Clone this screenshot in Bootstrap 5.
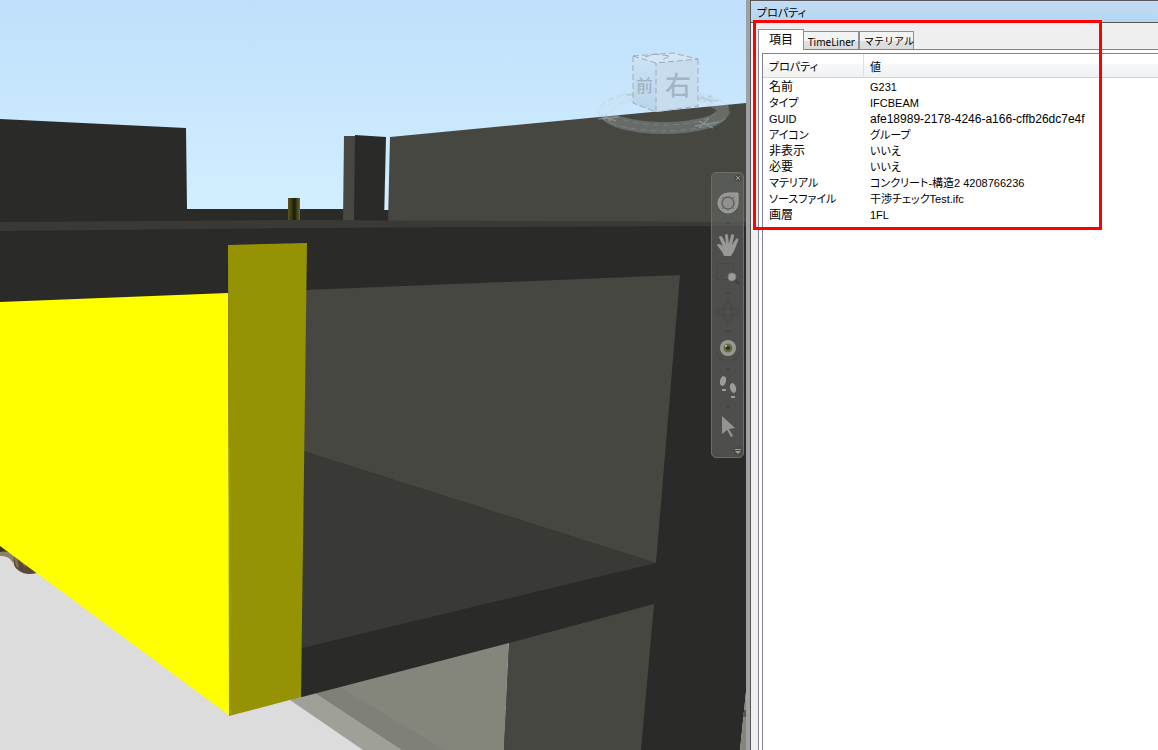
<!DOCTYPE html>
<html lang="ja">
<head>
<meta charset="utf-8">
<meta name="viewport" content="width=device-width, initial-scale=1">
<title>プロパティ</title>
<link rel="stylesheet" href="https://cdn.jsdelivr.net/npm/bootstrap@5.3.0/dist/css/bootstrap.min.css">
<script src="https://cdn.jsdelivr.net/npm/bootstrap@5.3.0/dist/js/bootstrap.bundle.min.js"></script>
<style>
body { font-family: "Liberation Sans", "Noto Sans CJK JP", sans-serif; font-size: 11px; line-height: 16px; color: #000; font-feature-settings: "palt"; }
.viewer { min-width: 0; background: #dcdcdc; }
.cube-label { font-family: "Noto Sans CJK JP", sans-serif; font-weight: 500; fill: #a3b4c4; }
.nav-tools { top: 172px; right: 2px; width: 33px; background: rgba(100, 101, 98, .62); border: 1px solid #6c6d6a; border-radius: 5px; }
.nav-tools button { border: 0; padding: 0; background: none; line-height: 0; }
.nav-tools svg { display: block; opacity: .85; }
.side { width: 412px; border-left: 4px solid #a0a0a0; background: #efefef; }
.side-in { border-left: 1px solid #58585a; }
.side-title { height: 23px; margin: 0; padding: 4px 6px 0; font-size: 11px; line-height: 16px; font-weight: 400; border-top: 1px solid #58585a; border-bottom: 1px solid #58585a; background: linear-gradient(#c4dcf4, #b4d6f2); }
.tabs { padding: 6px 0 0 7px; height: 26px; border: 0; }
.tabs .nav-link { height: 19px; padding: 2px 4px 0; border: 1px solid #8d8e98; border-bottom: 0; border-radius: 0; color: #000; line-height: 16px; background: linear-gradient(#f3f3f3 50%, #e0e0e0 50%, #dadada); }
.tabs .nav-link.active { height: 21px; width: 46px; padding: 1px 6px; border-color: #8d8e98; background: #fff; color: #000; font-size: 12px; position: relative; }
.tabs .tab-en { width: 56px; font-family: "Noto Sans", sans-serif; font-size: 10px; margin-left: -1px; white-space: nowrap; }
.tabs .tab-ja { width: 55px; font-size: 10px; white-space: nowrap; }
.page-box { margin-left: 7px; padding: 3px 0 0 3px; border: 1px solid #83838f; border-width: 1px 0 0 1px; background: #fff; }
.list-box { border: 1px solid #83838f; border-width: 1px 0 0 1px; }
.props { width: 100%; table-layout: fixed; border-collapse: separate; border-spacing: 0; }
.props th { font-weight: 400; padding: 0 6px; }
.props td { padding: 0 6px; white-space: nowrap; }
.props thead th { height: 24px; padding-top: 3px; border-bottom: 1px solid #d5d5d5; background: linear-gradient(#fff 10px, #f7f8fa 10px, #f0f1f3); }
.props thead th:first-child { width: 101px; border-right: 1px solid #dfe0e3; }
.props tbody:before { content: ""; display: block; height: 1px; }
.props .wide { font-size: 12px; }
.callout-frame { left: 2px; top: 20px; width: 349px; height: 210px; border: 3px solid #f00; pointer-events: none; }
</style>
</head>
<body>
<div class="d-flex vh-100 overflow-hidden">
  <main class="viewer flex-grow-1 position-relative">
    <svg class="d-block w-100 h-100" viewBox="0 0 746 750" preserveAspectRatio="xMidYMid slice" role="img" aria-label="3D">
      <defs>
        <linearGradient id="sky" x2="0" y2="1"><stop offset="0" stop-color="#bfdffb"/><stop offset="1" stop-color="#d2f0ff"/></linearGradient>
        <linearGradient id="pipe"><stop offset="0" stop-color="#5a5820"/><stop offset=".55" stop-color="#1c1b08"/><stop offset="1" stop-color="#6b692f"/></linearGradient>
        <linearGradient id="shade" x2="0" y2="1"><stop offset="0" stop-color="#cce3f5"/><stop offset="1" stop-color="#b8d3e8"/></linearGradient>
      </defs>
      <path fill="url(#sky)" d="M0 0h746v222H0z"/>
      <path fill="#2a2a28" d="M0 119l186 9 1 81h158v13H0z"/>
      <path fill="#464741" d="M344 136h11v86h-12z"/>
      <path fill="#2a2a28" d="M355 135l31 2-2 85h-30zM384 210h5v12h-5z"/>
      <path fill="#464741" d="M390 137l356-34v120H388z"/>
      <path fill="url(#pipe)" d="M288 198h12v23h-12z"/>
      <path fill="#393a36" d="M0 222l300-2 446 2v10H0z"/>
      <path fill="#84857b" d="M340 680l169-44-5 114h-61z"/>
      <path fill="#9fa097" d="M290 700l25-12 89 62h-41z"/>
      <path fill="#7f8077" d="M315 693l25-13 105 70h-43z"/>
      <path fill="#84857b" d="M340 687l10-8 155 0v71h-60z"/>
      <path fill="#2a2a28" d="M0 231l300-3 446-2v466l-6 58H504l5-107-207 54L0 540z"/>
      <path fill="#464741" d="M509 643l145-39-13 146H504z"/>
      <path fill="#84857b" d="M746 692v58h-6z"/><path fill="#555650" d="M744 710h2v7h-3z"/>
      <path fill="#464741" d="M305 290l375-15-24 288-353-112z"/>
      <path fill="#393a36" d="M303 451l353 112-354 85z"/>
      <path fill="#3a3b17" d="M0 543l22 15-12-5-10 1z"/><path fill="#8c8068" d="M0 552q10-2 15 5l-2 6q-4-8-13-7z"/>
      <path fill="#594a38" d="M14 556l23 17q-12 3-19-3-6-4-4-14z"/><path fill="#847158" d="M20 561l6 7-2-7zM14 556l2 10 3 3-2-12z"/>
      <path fill="#ff0" d="M0 302l228-9 2 423L0 546z"/>
      <path fill="#959303" d="M228 245l79-2-6 454-72 19z"/>
      <ellipse cx="664" cy="111" rx="59" ry="17" fill="none" stroke="#cddbe5" stroke-opacity=".25" stroke-width="12"/>
      <ellipse cx="664" cy="111" rx="66" ry="20" fill="none" stroke="#a7b3bb" stroke-opacity=".3" stroke-dasharray="6 4"/>
      <ellipse cx="664" cy="111" rx="51" ry="14" fill="none" stroke="#a7b3bb" stroke-opacity=".25" stroke-dasharray="6 4"/>
      <path d="M598 119l20-2m-16-1l14 5m-10-7l4 8m85 4l24-4m-20-1l14 7m-4-10l-10 10m-1-30l20 3m-17-5l12 7m-1-8l-8 7M626 95h8" fill="none" stroke="#a9b5bc" stroke-opacity=".45" stroke-width="1.500"/>
      <path fill="#d3e6f6" d="M633 56l40-3 25 6-42 4z"/>
      <path fill="url(#shade)" d="M633 56l23 7v49l-23-9z"/><path fill="#c7ddef" d="M656 63l42-4v47l-42 6z"/>
      <path d="M633 56l40-3 25 6-42 4zM633 56v47l23 9V63M698 59v47l-42 6M645 57l10-3 15 2-8 4" fill="none" stroke="#a2abb5" stroke-dasharray="6 3"/>
      <text class="cube-label" x="636" y="92" font-size="17">前</text>
      <text class="cube-label" x="665" y="95" font-size="26">右</text>
    </svg>
    <div class="nav-tools position-absolute d-flex flex-column" role="toolbar" aria-label="ナビゲーション">
      <button type="button" aria-label="閉じる"><svg width="31" height="12" viewBox="712 173 31 12"><circle cx="738" cy="178" r="3.5" fill="#464743"/><path d="M736 176l4 4m0-4l-4 4" stroke="#a5a6a3"/></svg></button>
      <button type="button" aria-label="ホイール"><svg width="31" height="40" viewBox="712 185 31 40"><path d="M728 193h10v10a10 10 0 1 1-10-10z" fill="#a0a19e" stroke="#b0b1ae"/><circle cx="728" cy="203" r="6" fill="none" stroke="#62635f" stroke-width="1.500"/><circle cx="728" cy="203" r="4" fill="#9a9b98"/><path d="M722 197l2 2m10-2l-2 2m-10 10l2-2m10 2l-2-2" stroke="#62635f"/><path d="M725 222h6l-3 3z" fill="#4a4b47"/></svg></button>
      <button type="button" aria-label="画面移動"><svg width="31" height="34" viewBox="712 225 31 34"><path d="M724 256c-1-4-5-8-7-11 1-2 4-1 6 2l-4-10c1-2 3-1 4 1l3 6-1-9c1-2 3-1 3 1l1 8 2-9c1-1 3-1 3 1l-2 9 4-6c2-1 3 0 2 2l-4 10-3 5z" fill="#a6a7a4"/></svg></button>
      <button type="button" aria-label="ズーム"><svg width="31" height="36" viewBox="712 259 31 36"><path d="M716.500 263.500h16v16h-16z" fill="none" stroke="#454642" stroke-dasharray="3 1"/><circle cx="732" cy="277" r="4" fill="#aaaba8" stroke="#858682"/><path d="M735 280l4 4" stroke="#3f403c" stroke-width="2"/><path d="M725 292h6l-3 3z" fill="#444541"/></svg></button>
      <button type="button" aria-label="オービット"><svg width="31" height="38" viewBox="712 295 31 38"><g fill="none" stroke="#424340" stroke-opacity=".75"><ellipse cx="728" cy="312" rx="10" ry="4"/><ellipse cx="728" cy="312" rx="4" ry="10"/><path d="M725 304l3-4 3 4m-3 20l-3-4m-7-11l-2 4 4 2m18-6l2 4-4 2"/></g><path d="M725 330h6l-3 3z" fill="#444541"/></svg></button>
      <button type="button" aria-label="見る"><svg width="31" height="38" viewBox="712 333 31 38"><path d="M717 352q0 6 7 8m15-8q0 6-7 8m-12-4v4h4m8 0h4v-4" fill="none" stroke="#444541"/><circle cx="728" cy="348" r="8" fill="#a5a69f"/><circle cx="728" cy="348" r="4.500" fill="#69753f"/><circle cx="728" cy="348" r="2" fill="#252b22"/><circle cx="726" cy="346" r="1" fill="#ddd"/><path d="M725 368h6l-3 3z" fill="#444541"/></svg></button>
      <button type="button" aria-label="ウォーク"><svg width="31" height="38" viewBox="712 371 31 38"><g fill="#a9aaa7"><ellipse cx="723" cy="381" rx="3" ry="5" transform="rotate(14 723 381)"/><ellipse cx="733" cy="388" rx="3" ry="5" transform="rotate(-16 733 388)"/><path d="M722 389h4v2h-4zM731 396h4v2h-4z"/></g><path d="M725 406h6l-3 3z" fill="#444541"/></svg></button>
      <button type="button" aria-label="選択"><svg width="31" height="36" viewBox="712 409 31 36"><path d="M722 416l13 12-6 1 4 7-2 1-4-7-5 4z" fill="#a0a19e"/></svg></button>
      <button type="button" aria-label="メニュー"><svg width="31" height="12" viewBox="712 445 31 12"><circle cx="738" cy="451" r="4" fill="#464743"/><path d="M735 449h6v1h-6zM735 451h6l-3 3z" fill="#aaaba8"/></svg></button>
    </div>
  </main>
  <aside class="side flex-shrink-0 d-flex">
    <div class="side-in position-relative flex-grow-1 d-flex flex-column">
      <h1 class="side-title">プロパティ</h1>
      <div class="tabs nav nav-tabs align-items-end flex-nowrap" role="tablist">
        <button type="button" class="nav-link active" role="tab" aria-selected="true">項目</button>
        <button type="button" class="nav-link tab-en" role="tab" aria-selected="false">TimeLiner</button>
        <button type="button" class="nav-link tab-ja" role="tab" aria-selected="false">マテリアル</button>
      </div>
      <section class="page-box flex-grow-1 d-flex">
        <div class="list-box flex-grow-1">
          <table class="props">
            <thead><tr><th scope="col">プロパティ</th><th scope="col">値</th></tr></thead>
            <tbody>
              <tr><th class="wide" scope="row">名前</th><td>G231</td></tr>
              <tr><th scope="row">タイプ</th><td>IFCBEAM</td></tr>
              <tr><th scope="row">GUID</th><td class="wide">afe18989-2178-4246-a166-cffb26dc7e4f</td></tr>
              <tr><th scope="row">アイコン</th><td>グループ</td></tr>
              <tr><th class="wide" scope="row">非表示</th><td>いいえ</td></tr>
              <tr><th class="wide" scope="row">必要</th><td>いいえ</td></tr>
              <tr><th scope="row">マテリアル</th><td>コンクリート-構造2 4208766236</td></tr>
              <tr><th scope="row">ソースファイル</th><td>干渉チェックTest.ifc</td></tr>
              <tr><th class="wide" scope="row">画層</th><td>1FL</td></tr>
            </tbody>
          </table>
        </div>
      </section>
      <div class="callout-frame position-absolute"></div>
    </div>
  </aside>
</div>
</body>
</html>
